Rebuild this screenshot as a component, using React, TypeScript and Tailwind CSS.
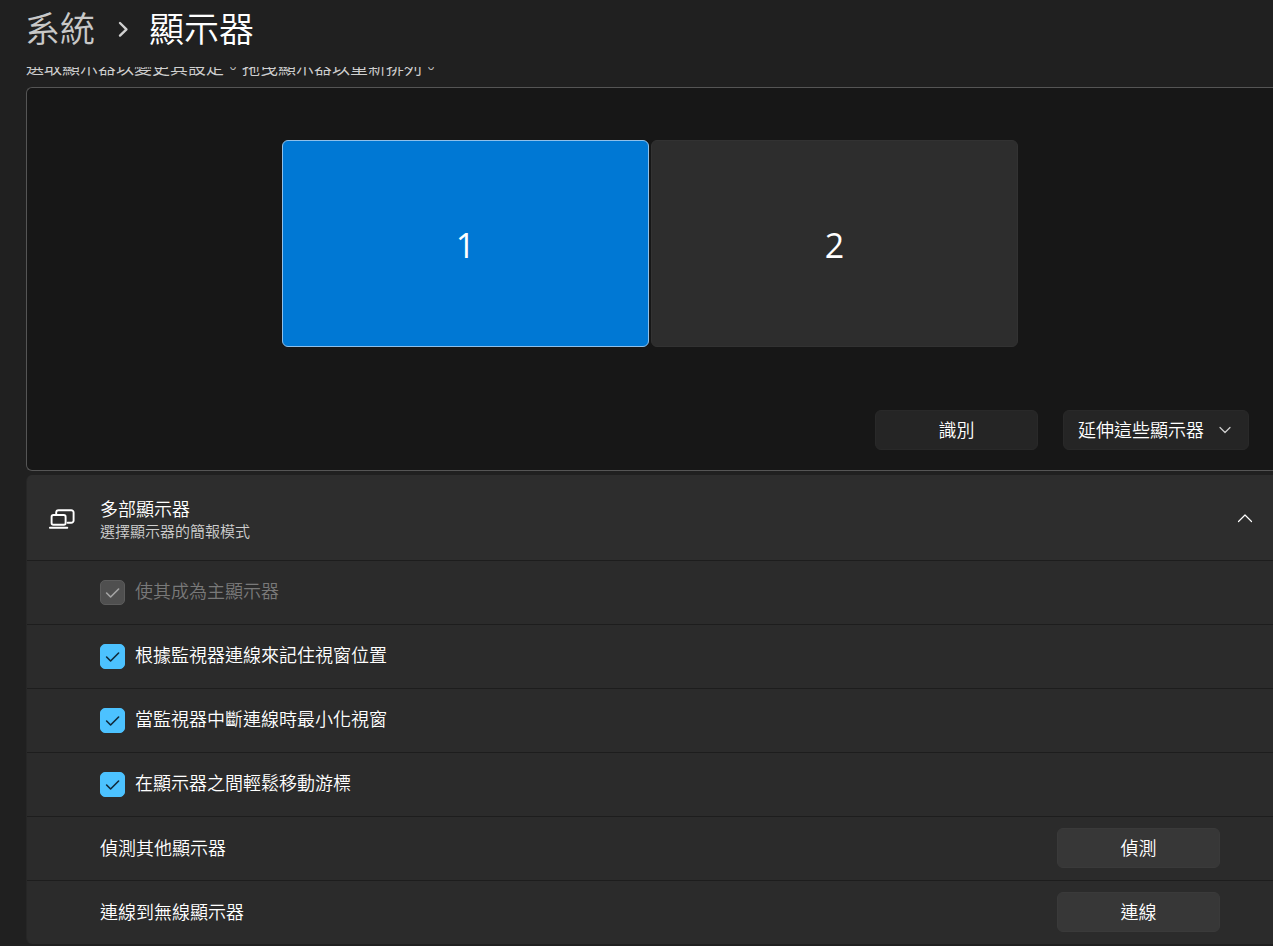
import { useState } from 'react';
import type { ReactNode } from 'react';

const monitors = [1, 2];

const options = [
  { id: 'main', label: '使其成為主顯示器', disabled: true },
  { id: 'remember', label: '根據監視器連線來記住視窗位置' },
  { id: 'minimize', label: '當監視器中斷連線時最小化視窗' },
  { id: 'cursor', label: '在顯示器之間輕鬆移動游標' },
];

const actions = [
  { id: 'detect', label: '偵測其他顯示器', button: '偵測' },
  { id: 'connect', label: '連線到無線顯示器', button: '連線' },
];

function Chevron({ className, d }: { className: string; d: string }) {
  return (
    <svg className={className} viewBox="0 0 16 16" fill="none" stroke="currentColor" strokeLinecap="round" strokeLinejoin="round" aria-hidden="true">
      <path d={d} />
    </svg>
  );
}

function DisplaysIcon() {
  return (
    <svg className="h-7 w-7" viewBox="0 0 28 28" fill="none" stroke="currentColor" strokeWidth="1.9" strokeLinecap="round" strokeLinejoin="round" aria-hidden="true">
      <path d="M8.2 9.2V7.6a2.4 2.4 0 0 1 2.4-2.4h12.6a2.4 2.4 0 0 1 2.4 2.4v7.8a2.4 2.4 0 0 1-2.4 2.4h-3.6" />
      <rect x="3.6" y="10" width="14" height="9.8" rx="1.8" />
      <path d="M1.9 22.8h17.4" />
    </svg>
  );
}

function CheckOption({ id, label, disabled }: { id: string; label: string; disabled?: boolean }) {
  const [checked, setChecked] = useState<boolean>(true);

  return (
    <Row>
      <div className="flex items-center gap-[10px]">
        <span className="relative h-[25px] w-[25px]">
          <input
            id={id}
            type="checkbox"
            checked={checked}
            disabled={disabled}
            onChange={(e) => setChecked(e.target.checked)}
            className="peer block h-full w-full appearance-none rounded-[5px] border border-[#9a9a9a] checked:border-[#4cc2ff] checked:bg-[#4cc2ff] disabled:border-[#5c5c5c] disabled:bg-[#4f4f4f]"
          />
          <svg
            className="pointer-events-none absolute inset-0 hidden h-full w-full text-[#10293a] peer-checked:block peer-disabled:text-[#a5a5a5]"
            viewBox="0 0 25 25"
            fill="none"
            stroke="currentColor"
            strokeWidth="1.6"
            strokeLinecap="round"
            strokeLinejoin="round"
            aria-hidden="true"
          >
            <path d="M6.6 13l4 4 8-8" />
          </svg>
        </span>
        <label htmlFor={id} className={disabled ? 'pb-[2px] text-[#797979]' : 'pb-[2px]'}>
          {label}
        </label>
      </div>
    </Row>
  );
}

function Row({ children }: { children: ReactNode }) {
  return <div className="flex h-16 items-center justify-between border-t border-[#1d1d1d] pr-[53px] pb-px pl-[73px]">{children}</div>;
}

export default function App() {
  const [open, setOpen] = useState<boolean>(true);

  return (
    <div className="min-h-screen bg-[#202020] pl-[26px] font-['Open_Sans','Noto_Sans_CJK_TC',sans-serif] text-[18px] leading-6 font-[350] text-white">
      <header className="flex h-[67px] items-center pb-[10px]">
        <nav className="-ml-px flex items-center text-[35px] leading-[48px]">
          <a href="#system" className="text-[#c8c8c8]">
            系統
          </a>
          <Chevron className="mr-[14px] ml-4 h-6 w-6 stroke-[1.6] text-[#d0d0d0]" d="M6 4l4.3 4.2L6 12.4" />
          <h1>顯示器</h1>
        </nav>
      </header>

      <main>
        {/* intro line, scrolled halfway under the header */}
        <div className="flex h-5 items-end overflow-hidden pb-2">
          <p className="shrink-0 text-[#cfcfcf]">選取顯示器以變更其設定。拖曳顯示器以重新排列。</p>
        </div>

        <section className="flex h-[384px] flex-col justify-between rounded-l-md border border-r-0 border-[#555555] bg-[#171717] pt-[52px] pb-5">
          <div className="flex justify-center gap-[2px]">
            {monitors.map((n) => (
              <button
                key={n}
                type="button"
                className={
                  n === 1
                    ? 'h-[207px] w-[367px] rounded-md border border-[#8fc0ea] bg-[#0078d4] pt-[2px] text-[34px] font-normal'
                    : 'h-[207px] w-[367px] rounded-md border border-[#323232] bg-[#2d2d2d] pt-[2px] text-[34px] font-normal'
                }
              >
                {n}
              </button>
            ))}
          </div>
          <div className="flex justify-end gap-[25px] pr-6">
            <button type="button" className="h-10 w-[163px] rounded-md border border-[#292929] bg-[#252525] pb-px">
              識別
            </button>
            <div className="relative">
              <select
                aria-label="多部顯示器"
                className="h-10 w-[186px] appearance-none rounded-md border border-[#292929] bg-[#252525] pb-px pl-[14px]"
              >
                <option>延伸這些顯示器</option>
              </select>
              <Chevron className="pointer-events-none absolute top-3 right-4 h-4 w-4 stroke-[1.2] text-[#d0d0d0]" d="M3 5.5l5 5 5-5" />
            </div>
          </div>
        </section>

        <section className="mt-1 overflow-hidden rounded-l-md border-l border-[#262626] bg-[#2b2b2b]">
          <button
            type="button"
            aria-expanded={open}
            onClick={() => setOpen(!open)}
            className="flex h-[85px] w-full items-center bg-[#2d2d2d] pt-[2px] pr-5 pl-[21px] text-left"
          >
            <DisplaysIcon />
            <span className="ml-6 flex grow flex-col">
              <span className="leading-6">多部顯示器</span>
              <span className="text-[15px] leading-5 text-[#cfcfcf]">選擇顯示器的簡報模式</span>
            </span>
            <Chevron className="h-4 w-4 stroke-[1.2]" d={open ? 'M1.5 10.5L8 4l6.5 6.5' : 'M1.5 5L8 11.5 14.5 5'} />
          </button>
          {open && (
            <>
              {options.map((o) => (
                <CheckOption key={o.id} {...o} />
              ))}
              {actions.map((a) => (
                <Row key={a.id}>
                  <span id={a.id}>{a.label}</span>
                  <button
                    type="button"
                    aria-describedby={a.id}
                    className="h-10 w-[163px] rounded-md border border-[#3a3a3a] bg-[#373737] pb-px"
                  >
                    {a.button}
                  </button>
                </Row>
              ))}
            </>
          )}
        </section>
      </main>
    </div>
  );
}
